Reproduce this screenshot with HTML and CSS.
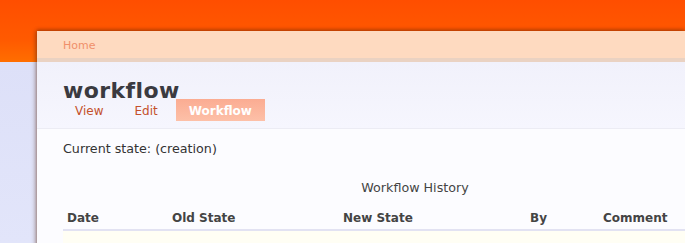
FILE: index.html
```html
<!DOCTYPE html>
<html lang="en">
<head>
    <meta charset="UTF-8">
    <title>workflow</title>
    <link rel="stylesheet" href="styles.css">
</head>
<body>

<div class="page">
    <div class="breadcrumb">
        <a href="#">Home</a>
    </div>

    <div class="head">
        <h1>workflow</h1>
        <div class="tabs">
            <a href="#">View</a>
            <a href="#">Edit</a>
            <a href="#" class="active">Workflow</a>
        </div>
    </div>

    <div class="content">
        <p class="state">Current state: (creation)</p>

        <table class="history">
            <caption>Workflow History</caption>
            <colgroup>
                <col class="c-date">
                <col class="c-old">
                <col class="c-new">
                <col class="c-by">
                <col class="c-comment">
            </colgroup>
            <thead>
                <tr>
                    <th>Date</th>
                    <th>Old State</th>
                    <th>New State</th>
                    <th>By</th>
                    <th>Comment</th>
                </tr>
            </thead>
            <tbody>
                <tr><td colspan="5">&nbsp;</td></tr>
            </tbody>
        </table>
    </div>
</div>

</body>
</html>
```

FILE: styles.css
```css
body {
    margin: 0;
    padding: 0;
    font-family: "DejaVu Sans", Verdana, sans-serif;
    font-size: 12px;
    color: #333;
    background: linear-gradient(#ff4e00 0, #ff5a00 40px, #ff6e00 62px, #dde0f8 62px, #e2e5fa 243px);
    overflow: hidden;
}
.page {
    margin: 31px 0 0 37px;
    box-shadow: -2px 0 4px rgba(80, 40, 20, 0.35), 0 -2px 3px rgba(120, 40, 0, 0.35);
    position: relative;
}
.breadcrumb {
    padding: 4px 0 0 26px;
    background: #fedac0;
    border-bottom: 4px solid #ead2c2;
    height: 23px;
    line-height: 20px;
}
.breadcrumb a {
    color: #f0906a;
    text-decoration: none;
    font-size: 11px;
}
.head {
    background: linear-gradient(#f1f1fb, #f6f6fe);
    padding: 18px 0 0 26px;
    height: 48px;
    border-bottom: 1px solid #ececf4;
}
.head h1 {
    margin: 0;
    font-size: 22px;
    line-height: 22px;
    color: #3a3a40;
    height: 19px;
    letter-spacing: 0.4px;
}
.tabs {
    display: flex;
    gap: 5px;
    margin-left: -1px;
}
.tabs a {
    padding: 2px 13px 0;
    height: 20px;
    line-height: 20px;
    color: #c4512c;
    text-decoration: none;
}
.tabs a.active {
    background: linear-gradient(#fbac92, #fdc0a8);
    color: #fff;
    font-weight: bold;
}
.content {
    background: #fcfcff;
    padding: 12px 0 20px 26px;
    height: 120px;
}
.state {
    margin: 0;
    line-height: 16px;
    font-size: 12.7px;
}
.history {
    margin-top: 24px;
    width: 704px;
    table-layout: fixed;
    border-collapse: collapse;
}
.history caption {
    color: #444;
    font-size: 12.7px;
    padding-bottom: 16px;
    line-height: 14px;
}
.c-date { width: 105px; }
.c-old { width: 171px; }
.c-new { width: 187px; }
.c-by { width: 73px; }
.history th {
    text-align: left;
    padding: 0 4px 4px;
    color: #444;
    border-bottom: 2px solid #e2e2f2;
    line-height: 14px;
}
.history td {
    background: #fffef4;
    height: 16px;
}
```
